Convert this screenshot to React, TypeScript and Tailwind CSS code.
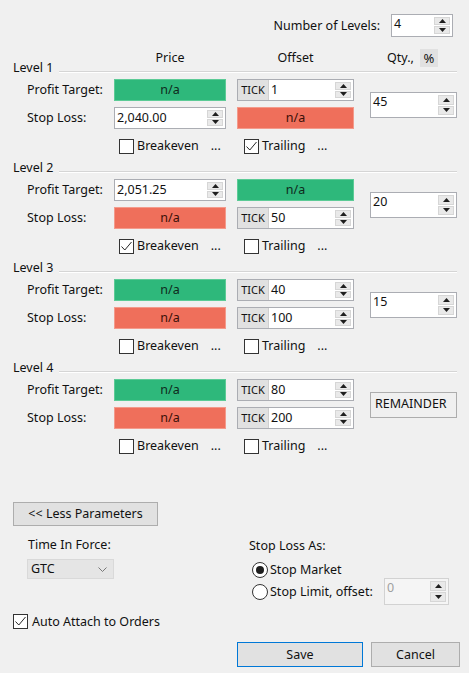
import React from "react";

const Up = () => (
  <svg width="7" height="4" viewBox="0 0 7 4">
    <path d="M0 4 L3.5 0 L7 4 Z" fill="#1e1e1e" />
  </svg>
);
const Down = () => (
  <svg width="7" height="4" viewBox="0 0 7 4">
    <path d="M0 0 L3.5 4 L7 0 Z" fill="#1e1e1e" />
  </svg>
);

function SpinBtns() {
  return (
    <div className="flex flex-col gap-px py-[2px] pr-[2px]">
      <div className="flex-1 w-[16px] bg-[#e9e9e9] border border-[#d6d6d6] flex items-center justify-center">
        <Up />
      </div>
      <div className="flex-1 w-[16px] bg-[#e9e9e9] border border-[#d6d6d6] flex items-center justify-center">
        <Down />
      </div>
    </div>
  );
}

function Spin({
  value,
  className = "",
  tick = false,
  disabled = false,
  top = false,
}: {
  value: string;
  className?: string;
  tick?: boolean;
  disabled?: boolean;
  top?: boolean;
}) {
  return (
    <div
      className={`flex border ${
        disabled ? "border-[#d2d2d2] bg-[#f5f5f5] text-[#a0a0a0]" : "border-[#abadb3] bg-white"
      } ${className}`}
    >
      {tick && (
        <div className="w-[31px] bg-[#e1e1e1] border-r border-[#cfcfcf] flex items-center justify-center text-[11px] text-[#111]">
          TICK
        </div>
      )}
      <div className={`flex-1 pl-[2px] flex ${top ? "items-start pt-[1px]" : "items-center"}`}>{value}</div>
      <SpinBtns />
    </div>
  );
}

function Check({ checked }: { checked: boolean }) {
  return (
    <span className="w-[15px] h-[15px] border border-[#333333] bg-white flex items-center justify-center shrink-0">
      {checked && (
        <svg width="13" height="13" viewBox="0 0 13 13">
          <path d="M1.5 6.5 L4.8 10 L11.5 2" stroke="#262626" strokeWidth="1" fill="none" />
        </svg>
      )}
    </span>
  );
}

function Radio({ checked }: { checked: boolean }) {
  return (
    <span className="w-[16px] h-[16px] rounded-full border border-[#333333] bg-white flex items-center justify-center shrink-0">
      {checked && <span className="w-[8px] h-[8px] rounded-full bg-[#1e1e1e]" />}
    </span>
  );
}

type Cell =
  | { kind: "green" }
  | { kind: "red" }
  | { kind: "spin"; v: string }
  | { kind: "tick"; v: string };

function CellView({ c }: { c: Cell }) {
  if (c.kind === "green")
    return (
      <div className="h-full bg-[#2eb87b] border border-[#5ccb96] flex items-center justify-center text-[#0f2a1c]">
        n/a
      </div>
    );
  if (c.kind === "red")
    return (
      <div className="h-full bg-[#ef6f5b] border border-[#f39a8b] flex items-center justify-center text-[#3a0f08]">
        n/a
      </div>
    );
  if (c.kind === "spin") return <Spin value={c.v} className="h-full" />;
  return <Spin value={c.v} tick className="h-full" />;
}

type Level = {
  n: number;
  pt: Cell;
  ptOff: Cell;
  sl: Cell;
  slOff: Cell;
  be: boolean;
  tr: boolean;
  qty: string;
};

const levels: Level[] = [
  { n: 1, pt: { kind: "green" }, ptOff: { kind: "tick", v: "1" }, sl: { kind: "spin", v: "2,040.00" }, slOff: { kind: "red" }, be: false, tr: true, qty: "45" },
  { n: 2, pt: { kind: "spin", v: "2,051.25" }, ptOff: { kind: "green" }, sl: { kind: "red" }, slOff: { kind: "tick", v: "50" }, be: true, tr: false, qty: "20" },
  { n: 3, pt: { kind: "green" }, ptOff: { kind: "tick", v: "40" }, sl: { kind: "red" }, slOff: { kind: "tick", v: "100" }, be: false, tr: false, qty: "15" },
  { n: 4, pt: { kind: "green" }, ptOff: { kind: "tick", v: "80" }, sl: { kind: "red" }, slOff: { kind: "tick", v: "200" }, be: false, tr: false, qty: "REMAINDER" },
];

function LevelBlock({ l }: { l: Level }) {
  return (
    <div className="pl-[13px] pr-[12px] pb-[7px]">
      <div className="h-[14px] flex items-center gap-[6px]">
        <span className="leading-[14px]">Level {l.n}</span>
        <div className="flex-1 mt-[8px] border-t border-[#d5d5d5] border-b border-b-white" />
      </div>
      <div className="flex mt-[4px] pl-[14px]">
        <div className="flex flex-col">
          <div className="flex h-[22px] items-center">
            <span className="w-[87px]">Profit Target:</span>
            <div className="w-[112px] h-full">
              <CellView c={l.pt} />
            </div>
            <div className="w-[11px]" />
            <div className="w-[117px] h-full">
              <CellView c={l.ptOff} />
            </div>
          </div>
          <div className="flex h-[22px] items-center mt-[6px]">
            <span className="w-[87px]">Stop Loss:</span>
            <div className="w-[112px] h-full">
              <CellView c={l.sl} />
            </div>
            <div className="w-[11px]" />
            <div className="w-[117px] h-full">
              <CellView c={l.slOff} />
            </div>
          </div>
          <div className="flex h-[16px] items-center mt-[9px]">
            <div className="w-[92px]" />
            <div className="w-[118px] flex items-center">
              <Check checked={l.be} />
              <span className="ml-[3px]">Breakeven</span>
              <span className="ml-[12px]">...</span>
            </div>
            <div className="w-[7px]" />
            <div className="flex items-center">
              <Check checked={l.tr} />
              <span className="ml-[3px]">Trailing</span>
              <span className="ml-[12px]">...</span>
            </div>
          </div>
        </div>
        <div className="ml-[16px] mt-[13px] w-[88px] h-[26px]">
          {l.qty === "REMAINDER" ? (
            <div className="h-full border border-[#adadad] bg-[#f0f0f0] pl-[4px] pt-[2px] leading-[18px]">
              REMAINDER
            </div>
          ) : (
            <Spin value={l.qty} top className="h-full" />
          )}
        </div>
      </div>
    </div>
  );
}

export default function App() {
  return (
    <div className="w-[474px] h-[680px] bg-white overflow-hidden">
      <div className="w-[469px] h-[673px] bg-[#f0f0f0] flex flex-col text-[12.5px] text-[#111] font-['Noto_Sans',sans-serif] leading-[16px]">
        {/* Number of Levels */}
        <div className="mt-[14px] h-[23px] flex items-center justify-end pr-[16px]">
          <span className="mr-[11px]">Number of Levels:</span>
          <Spin value="4" top className="w-[62px] h-[23px]" />
        </div>

        {/* Header */}
        <div className="mt-[12px] h-[18px] flex items-center pl-[27px]">
          <div className="w-[87px]" />
          <div className="w-[112px] text-center">Price</div>
          <div className="w-[11px]" />
          <div className="w-[117px] text-center">Offset</div>
          <div className="w-[16px]" />
          <div className="w-[88px] flex items-center pl-[17px]">
            <span>Qty.,</span>
            <span className="ml-[6px] w-[18px] h-[18px] bg-[#e1e1e1] flex items-center justify-center text-[13px]">%</span>
          </div>
        </div>

        <div className="-mt-[6px] flex flex-col">
          {levels.map((l) => (
            <LevelBlock key={l.n} l={l} />
          ))}
        </div>

        {/* Less parameters */}
        <div className="mt-[41px] pl-[13px]">
          <div className="w-[145px] h-[24px] bg-[#e1e1e1] border border-[#adadad] flex items-center justify-center">
            &lt;&lt; Less Parameters
          </div>
        </div>

        {/* TIF & Stop loss as */}
        <div className="mt-[11px] flex">
          <div className="pl-[28px] w-[249px] flex flex-col">
            <div className="h-[16px] flex items-center">Time In Force:</div>
            <div className="mt-[6px] w-[87px] h-[20px] bg-[#e5e5e5] border border-[#d9d9d9] flex items-center pl-[3px] -ml-px">
              <span className="flex-1">GTC</span>
              <svg width="9" height="5" viewBox="0 0 9 5" className="mr-[6px]">
                <path d="M0.5 0.5 L4.5 4.5 L8.5 0.5" stroke="#777" fill="none" strokeWidth="1" />
              </svg>
            </div>
          </div>
          <div className="flex flex-col">
            <div className="h-[16px] flex items-center mt-px">Stop Loss As:</div>
            <div className="mt-[8px] h-[16px] flex items-center pl-[3px]">
              <Radio checked />
              <span className="ml-[2px]">Stop Market</span>
            </div>
            <div className="flex items-center h-[27px]">
              <div className="w-[135px] flex items-center pl-[3px]">
                <Radio checked={false} />
                <span className="ml-[2px]">Stop Limit, offset:</span>
              </div>
              <Spin value="0" top disabled className="w-[65px] h-[27px]" />
            </div>
          </div>
        </div>

        {/* Auto attach */}
        <div className="mt-[9px] pl-[13px] h-[15px] flex items-center">
          <Check checked />
          <span className="ml-[4px]">Auto Attach to Orders</span>
        </div>

        {/* Buttons */}
        <div className="mt-[13px] flex pl-[237px] gap-[8px]">
          <div className="w-[126px] h-[25px] bg-[#e1e1e1] border border-[#0078d7] flex items-center justify-center">
            Save
          </div>
          <div className="w-[89px] h-[25px] bg-[#e1e1e1] border border-[#adadad] flex items-center justify-center">
            Cancel
          </div>
        </div>
      </div>
    </div>
  );
}
